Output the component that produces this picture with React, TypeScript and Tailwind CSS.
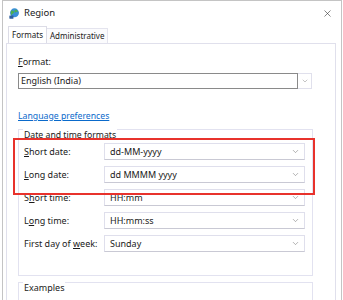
import { ChevronDown, X } from "lucide-react";

const font = { fontFamily: '"Noto Sans", "Segoe UI", sans-serif' };

function Select({ value }: { value: string }) {
  return (
    <div className="flex h-[17px] w-[201px] items-center justify-between border border-[#dfdfec] border-b-[#c9c9d4] bg-white pl-[5px] pr-[4px]">
      <span className="text-[9px] text-[#1a1a1a]">{value}</span>
      <ChevronDown size={9} strokeWidth={1.5} className="text-[#7a7a7a]" />
    </div>
  );
}

function Row({ label, value }: { label: React.ReactNode; value: string }) {
  return (
    <div className="flex h-[17px] items-center">
      <span className="w-[80px] text-[9px] text-[#1a1a1a]">{label}</span>
      <Select value={value} />
    </div>
  );
}

function Globe() {
  return (
    <svg width="11" height="11" viewBox="0 0 16 16">
      <circle cx="8" cy="7" r="6.5" fill="#3a8fd8" />
      <path d="M3 4c2-1 3 0 4 1s0 3-1 3-2 1-2 3c-1-1-2-3-1-7z" fill="#4caf50" />
      <path d="M9 2c2 0 4 2 4 4-1 0-2-1-3 0s-2 0-2-1 0-2 1-3z" fill="#4caf50" />
      <rect x="0.5" y="11" width="6" height="4.5" rx="0.5" fill="#2f5f9e" />
    </svg>
  );
}

export default function App() {
  return (
    <div style={font} className="relative h-[300px] w-[343px] overflow-hidden bg-white">
      <div className="ml-[2px] h-full w-[340px] border-x border-t border-[#c4c4c4] bg-white">
        {/* title bar */}
        <div className="flex h-[24px] items-center justify-between pl-[6px] pr-[8px]">
          <div className="flex items-center gap-[4px]">
            <Globe />
            <span className="text-[9.5px] text-[#1a1a1a]">Region</span>
          </div>
          <X size={11} strokeWidth={1.3} className="text-[#333]" />
        </div>

        {/* tabs */}
        <div className="flex h-[18px] items-end pl-[5px]">
          <div className="flex h-[17px] items-center border-x border-t border-[#dcdce6] bg-white px-[3px] text-[8px] text-[#1a1a1a]">
            Formats
          </div>
          <div className="flex h-[15px] items-center border-r border-t border-[#e4e4ee] bg-[#fbfbfd] px-[3px] text-[8px] text-[#1a1a1a]">
            Administrative
          </div>
        </div>

        {/* panel */}
        <div className="ml-[3px] h-[300px] w-[330px] border border-[#e0e0ec] pl-[11px] pt-[11px]">
          <div className="text-[9px] leading-[14px] text-[#1a1a1a]">
            <span className="underline">F</span>ormat:
          </div>
          <div className="mt-[4px] flex h-[16px] w-[294px]">
            <div className="flex flex-1 items-center border border-[#8a8a8a] bg-white pl-[2px] text-[9px] text-[#1a1a1a]">
              English (India)
            </div>
            <div className="flex w-[14px] items-center justify-center border border-l-0 border-[#e0e0ec]">
              <ChevronDown size={8} strokeWidth={1.5} className="text-[#8a8a8a]" />
            </div>
          </div>

          <div className="mt-[20px] text-[8.7px] leading-[14px] text-[#0a6acb] underline">
            Language preferences
          </div>

          <div className="relative mt-[5px] w-[295px]">
            <div className="absolute left-[5px] top-0 bg-white px-[1px] text-[8.7px] leading-[12px] text-[#1a1a1a]">
              Date and time formats
            </div>
            <div className="mt-[6px] h-[147px] border border-[#e2e2f0] pl-[5px] pt-[13px]">
              <div className="flex flex-col gap-[6px]">
                <Row label={<><span className="underline">S</span>hort date:</>} value="dd-MM-yyyy" />
                <Row label={<><span className="underline">L</span>ong date:</>} value="dd MMMM yyyy" />
                <Row label={<>S<span className="underline">h</span>ort time:</>} value="HH:mm" />
                <Row label={<>L<span className="underline">o</span>ng time:</>} value="HH:mm:ss" />
                <Row label={<>First day of <span className="underline">w</span>eek:</>} value="Sunday" />
              </div>
            </div>
          </div>

          <div className="relative mt-[6px] w-[295px]">
            <div className="absolute left-[5px] top-0 bg-white px-[1px] text-[9px] leading-[12px] text-[#1a1a1a]">
              Examples
            </div>
            <div className="mt-[6px] h-[40px] border border-[#e2e2f0]" />
          </div>
        </div>
      </div>

      {/* red highlight annotation */}
      <div className="absolute left-[13px] top-[138px] h-[57px] w-[302px] border-2 border-[#e8322c]" />
    </div>
  );
}
